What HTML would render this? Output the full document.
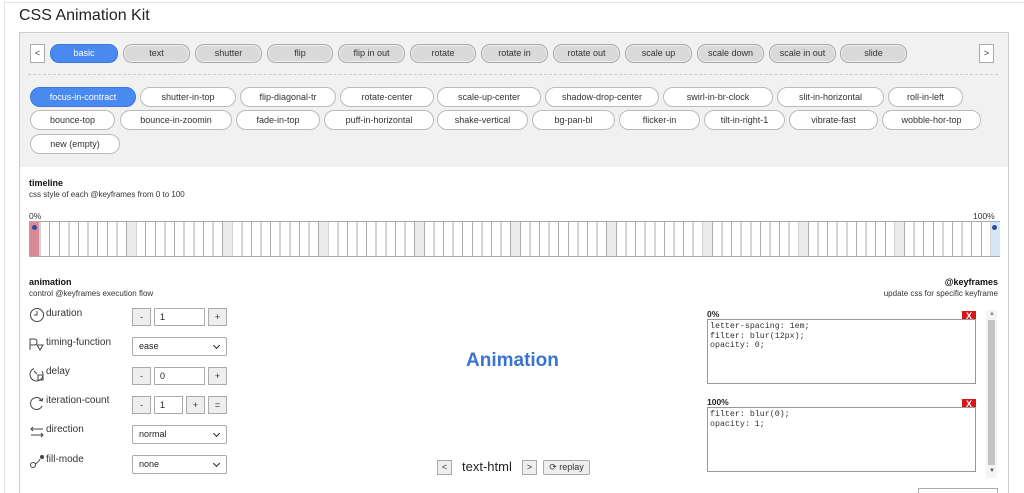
<!DOCTYPE html>
<html style="width:1024px;height:493px;overflow:hidden"><head><meta charset="utf-8"><style>
*{box-sizing:border-box;margin:0;padding:0}
body{width:1024px;height:493px;overflow:hidden;background:#fff;font-family:"Liberation Sans",Arial,sans-serif;color:#222;position:relative}
.a{position:absolute}
.outer{left:4px;top:2px;width:1020px;height:500px;border-left:1px solid #e4e4e4;border-top:1px solid #e4e4e4}
h1{position:absolute;left:19px;top:7px;font-size:16px;font-weight:normal;color:#222}
.box{left:19px;top:32px;width:990px;height:480px;border:1px solid #ccc;background:#fff}
.gray{left:20px;top:33px;width:988px;height:134px;background:#f1f1f1}
.cat{position:absolute;top:44px;height:19px;border:1px solid #aaa;border-radius:9px;background:#d9d9d9;font-size:9px;text-align:center;line-height:17px;color:#333;box-shadow:inset 0 0 0 1px #eee}
.cat.on{background:#4a8af0;color:#fff;border-color:#3b78d8;box-shadow:none}
.sq{position:absolute;top:44px;width:15px;height:19px;border:1px solid #aaa;background:#fff;font-size:9px;text-align:center;line-height:17px;color:#333}
.dots{left:28px;top:74px;width:970px;border-top:1px dashed #ccc}
.p{position:absolute;height:20px;border:1px solid #bbb;border-radius:10px;background:#fff;font-size:9px;text-align:center;line-height:18px;color:#333}
.p.on{background:#4a8af0;color:#fff;border-color:#3b78d8}
.t{font-size:9px;font-weight:bold;color:#111}
.s{font-size:8px;color:#333}
.tl{left:29px;top:221px;width:971px;height:36px;border:1px solid #aaa;background:repeating-linear-gradient(to right,#aaa 0 1px,#fff 1px 9.604px)}
.g{position:absolute;top:0;width:8.6px;height:34px;background:#ebebeb}
.lab{font-size:10px;color:#333}
.btn{position:absolute;height:18px;border:1px solid #aaa;background:#eee;font-size:9px;text-align:center;line-height:16px;color:#333}
.inp{position:absolute;height:18px;border:1px solid #aaa;background:#fff;font-size:9px;line-height:16px;padding-left:5px}
.sel{position:absolute;width:95px;height:19px;border:1px solid #aaa;background:#fff;font-size:9px;line-height:17px;padding-left:6px;border-radius:2px}
.sel:after{content:"";position:absolute;right:7px;top:5px;width:4px;height:4px;border-right:1.5px solid #222;border-bottom:1.5px solid #222;transform:rotate(45deg)}
.ta{position:absolute;left:707px;width:269px;border:1px solid #999;background:#fff;font-family:"Liberation Mono",monospace;font-size:8.3px;line-height:9.5px;padding:2px;color:#333}
.x{position:absolute;width:14px;height:10px;background:#d8151b;color:#fff;font-size:9px;font-weight:bold;text-align:center;line-height:10px}
</style></head><body>
<div class="a outer"></div>
<h1>CSS Animation Kit</h1>
<div class="a box"></div>
<div class="a gray"></div>
<div class="sq" style="left:30px">&lt;</div>
<div class="cat on" style="left:50px;width:68px">basic</div>
<div class="cat" style="left:123px;width:67px">text</div>
<div class="cat" style="left:195px;width:67px">shutter</div>
<div class="cat" style="left:267px;width:66px">flip</div>
<div class="cat" style="left:338px;width:67px">flip in out</div>
<div class="cat" style="left:410px;width:66px">rotate</div>
<div class="cat" style="left:481px;width:67px">rotate in</div>
<div class="cat" style="left:553px;width:67px">rotate out</div>
<div class="cat" style="left:625px;width:67px">scale up</div>
<div class="cat" style="left:697px;width:67px">scale down</div>
<div class="cat" style="left:769px;width:67px">scale in out</div>
<div class="cat" style="left:840px;width:67px">slide</div>
<div class="sq" style="left:979px">&gt;</div>
<div class="a dots"></div>

<div class="p on" style="left:30px;top:87px;width:106px">focus-in-contract</div>
<div class="p" style="left:140px;top:87px;width:96px">shutter-in-top</div>
<div class="p" style="left:240px;top:87px;width:96px">flip-diagonal-tr</div>
<div class="p" style="left:340px;top:87px;width:94px">rotate-center</div>
<div class="p" style="left:437px;top:87px;width:104px">scale-up-center</div>
<div class="p" style="left:545px;top:87px;width:114px">shadow-drop-center</div>
<div class="p" style="left:663px;top:87px;width:110px">swirl-in-br-clock</div>
<div class="p" style="left:777px;top:87px;width:107px">slit-in-horizontal</div>
<div class="p" style="left:888px;top:87px;width:75px">roll-in-left</div>

<div class="p" style="left:30px;top:110px;width:85px">bounce-top</div>
<div class="p" style="left:120px;top:110px;width:112px">bounce-in-zoomin</div>
<div class="p" style="left:236px;top:110px;width:84px">fade-in-top</div>
<div class="p" style="left:324px;top:110px;width:110px">puff-in-horizontal</div>
<div class="p" style="left:437px;top:110px;width:91px">shake-vertical</div>
<div class="p" style="left:532px;top:110px;width:83px">bg-pan-bl</div>
<div class="p" style="left:619px;top:110px;width:81px">flicker-in</div>
<div class="p" style="left:704px;top:110px;width:81px">tilt-in-right-1</div>
<div class="p" style="left:789px;top:110px;width:89px">vibrate-fast</div>
<div class="p" style="left:882px;top:110px;width:99px">wobble-hor-top</div>
<div class="p" style="left:30px;top:134px;width:90px">new (empty)</div>

<div class="a t" style="left:29px;top:178px">timeline</div>
<div class="a s" style="left:29px;top:190px">css style of each @keyframes from 0 to 100</div>
<div class="a" style="left:29px;top:211px;font-size:8.5px;color:#333">0%</div>
<div class="a" style="left:973px;top:211px;font-size:8.5px;color:#333">100%</div>
<div class="a tl">
<div class="g" style="left:0;width:9px;background:#d98a96"></div>
<div class="g" style="left:97px"></div><div class="g" style="left:193px"></div><div class="g" style="left:289px"></div><div class="g" style="left:385px"></div><div class="g" style="left:481px"></div><div class="g" style="left:577px"></div><div class="g" style="left:673px"></div><div class="g" style="left:769px"></div><div class="g" style="left:865px"></div>
<div class="g" style="left:961px;background:#d6e6f5"></div>
<div class="a" style="left:2px;top:3px;width:5px;height:5px;border-radius:50%;background:#2a4aa0"></div>
<div class="a" style="left:962px;top:3px;width:5px;height:5px;border-radius:50%;background:#2a4aa0"></div>
</div>

<div class="a t" style="left:29px;top:277px">animation</div>
<div class="a s" style="left:29px;top:289px">control @keyframes execution flow</div>

<svg class="a" style="left:29px;top:307px" width="16" height="16" viewBox="0 0 16 16" fill="none" stroke="#444" stroke-width="1"><circle cx="8" cy="8" r="6.5"/><path d="M8 4v4h-3"/></svg>
<div class="a lab" style="left:46px;top:308px">duration</div>
<div class="btn" style="left:132px;top:308px;width:19px">-</div>
<div class="inp" style="left:154px;top:308px;width:51px">1</div>
<div class="btn" style="left:208px;top:308px;width:19px">+</div>

<svg class="a" style="left:29px;top:337px" width="16" height="14" viewBox="0 0 16 14" fill="none" stroke="#444"><path d="M1 13V2h4q3 0 3 3t-3 3H1"/><path d="M8 8l3 5 3-5z"/></svg>
<div class="a lab" style="left:46px;top:337px">timing-function</div>
<div class="sel" style="left:132px;top:337px">ease</div>

<svg class="a" style="left:29px;top:366px" width="16" height="16" viewBox="0 0 16 16" fill="none" stroke="#444"><path d="M5 2.5A6.5 6.5 0 1 0 13 5"/><path d="M8 8L5 5"/><rect x="9" y="9" width="5" height="5"/></svg>
<div class="a lab" style="left:46px;top:366px">delay</div>
<div class="btn" style="left:132px;top:367px;width:19px">-</div>
<div class="inp" style="left:154px;top:367px;width:51px">0</div>
<div class="btn" style="left:208px;top:367px;width:19px">+</div>

<svg class="a" style="left:29px;top:395px" width="16" height="16" viewBox="0 0 16 16" fill="none" stroke="#444"><path d="M13 6A6 6 0 1 0 13 11"/><path d="M10 5l3 1 1-3"/></svg>
<div class="a lab" style="left:46px;top:395px">iteration-count</div>
<div class="btn" style="left:132px;top:396px;width:19px">-</div>
<div class="inp" style="left:154px;top:396px;width:29px">1</div>
<div class="btn" style="left:186px;top:396px;width:19px">+</div>
<div class="btn" style="left:208px;top:396px;width:19px">=</div>

<svg class="a" style="left:29px;top:424px" width="16" height="16" viewBox="0 0 16 16" fill="none" stroke="#444"><path d="M2 5h12M4 3L2 5l2 2M14 11H2M12 9l2 2-2 2"/></svg>
<div class="a lab" style="left:46px;top:424px">direction</div>
<div class="sel" style="left:132px;top:425px">normal</div>

<svg class="a" style="left:29px;top:453px" width="16" height="16" viewBox="0 0 16 16" fill="none" stroke="#444"><circle cx="4" cy="12" r="2.5"/><path d="M6 11Q10 9 11 6"/><circle cx="13" cy="4" r="1.5" fill="#444"/></svg>
<div class="a lab" style="left:46px;top:454px">fill-mode</div>
<div class="sel" style="left:132px;top:455px">none</div>

<div class="a" style="left:466px;top:350px;font-size:19px;font-weight:bold;color:#3a74cf">Animation</div>

<div class="btn" style="left:437px;top:460px;width:15px;height:15px;line-height:13px">&lt;</div>
<div class="a" style="left:462px;top:459px;font-size:13px;color:#222">text-html</div>
<div class="btn" style="left:522px;top:460px;width:15px;height:15px;line-height:13px">&gt;</div>
<div class="btn" style="left:543px;top:460px;width:47px;height:15px;line-height:13px;border-radius:2px">⟳ replay</div>

<div class="a t" style="right:26px;top:277px">@keyframes</div>
<div class="a s" style="right:26px;top:289px">update css for specific keyframe</div>

<div class="a" style="left:707px;top:309px;font-weight:bold;font-size:8.5px">0%</div>
<div class="x" style="left:962px;top:311px">X</div>
<div class="ta" style="top:319px;height:65px">letter-spacing: 1em;<br>filter: blur(12px);<br>opacity: 0;</div>
<div class="a" style="left:707px;top:397px;font-weight:bold;font-size:8.5px">100%</div>
<div class="x" style="left:962px;top:399px">X</div>
<div class="ta" style="top:407px;height:65px">filter: blur(0);<br>opacity: 1;</div>

<div class="a" style="left:986px;top:310px;width:11px;height:168px;background:#f4f4f4"></div>
<div class="a" style="left:988px;top:320px;width:7px;height:145px;background:#c4c4c4"></div>
<div class="a" style="left:989px;top:311px;font-size:6px;color:#888">▲</div>
<div class="a" style="left:989px;top:468px;font-size:6px;color:#555">▼</div>

<div class="a" style="left:918px;top:488px;width:80px;height:10px;border:1px solid #aaa;background:#fff"></div>
</body></html>
